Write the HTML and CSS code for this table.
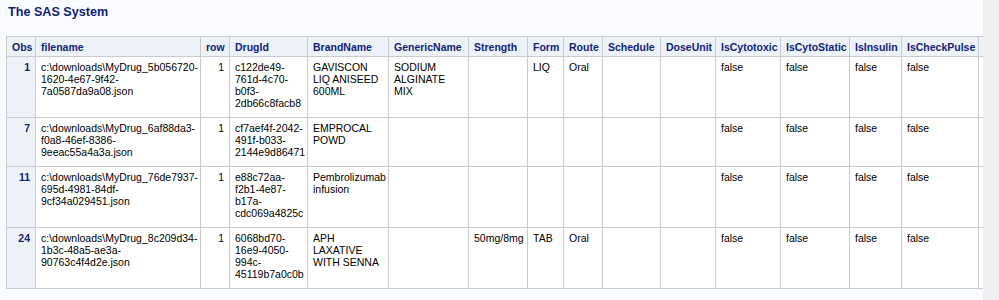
FILE: index.html
```html
<!DOCTYPE html>
<html>
<head>
<meta charset="utf-8">
<title>The SAS System</title>
<link rel="stylesheet" href="styles.css">
</head>
<body>
<div class="frame">
  <div class="page">
    <div class="title">The SAS System</div>
    <table class="sas">
      <colgroup>
        <col class="w-obs"><col class="w-file"><col class="w-row"><col class="w-drug"><col class="w-brand"><col class="w-generic"><col class="w-strength"><col class="w-form"><col class="w-route"><col class="w-sched"><col class="w-dose"><col class="w-cytotox"><col class="w-cytostat"><col class="w-insulin"><col class="w-pulse"><col class="w-more">
      </colgroup>
      <thead>
        <tr>
          <th>Obs</th><th>filename</th><th class="num">row</th><th>DrugId</th><th>BrandName</th><th>GenericName</th><th>Strength</th><th>Form</th><th>Route</th><th>Schedule</th><th>DoseUnit</th><th>IsCytotoxic</th><th>IsCytoStatic</th><th>IsInsulin</th><th>IsCheckPulse</th><th></th>
        </tr>
      </thead>
      <tbody>
        <tr>
          <th class="obs">1</th>
          <td>c:\downloads\MyDrug_5b056720-<br>1620-4e67-9f42-<br>7a0587da9a08.json</td>
          <td class="num">1</td>
          <td>c122de49-<br>761d-4c70-<br>b0f3-<br>2db66c8facb8</td>
          <td>GAVISCON<br>LIQ ANISEED<br>600ML</td>
          <td>SODIUM<br>ALGINATE<br>MIX</td>
          <td></td>
          <td>LIQ</td>
          <td>Oral</td>
          <td></td>
          <td></td>
          <td>false</td><td>false</td><td>false</td><td>false</td><td></td>
        </tr>
        <tr>
          <th class="obs">7</th>
          <td>c:\downloads\MyDrug_6af88da3-<br>f0a8-46ef-8386-<br>9eeac55a4a3a.json</td>
          <td class="num">1</td>
          <td>cf7aef4f-2042-<br>491f-b033-<br>2144e9d86471</td>
          <td>EMPROCAL<br>POWD</td>
          <td></td>
          <td></td>
          <td></td>
          <td></td>
          <td></td>
          <td></td>
          <td>false</td><td>false</td><td>false</td><td>false</td><td></td>
        </tr>
        <tr>
          <th class="obs">11</th>
          <td>c:\downloads\MyDrug_76de7937-<br>695d-4981-84df-<br>9cf34a029451.json</td>
          <td class="num">1</td>
          <td>e88c72aa-<br>f2b1-4e87-<br>b17a-<br>cdc069a4825c</td>
          <td>Pembrolizumab<br>infusion</td>
          <td></td>
          <td></td>
          <td></td>
          <td></td>
          <td></td>
          <td></td>
          <td>false</td><td>false</td><td>false</td><td>false</td><td></td>
        </tr>
        <tr>
          <th class="obs">24</th>
          <td>c:\downloads\MyDrug_8c209d34-<br>1b3c-48a5-ae3a-<br>90763c4f4d2e.json</td>
          <td class="num">1</td>
          <td>6068bd70-<br>16e9-4050-<br>994c-<br>45119b7a0c0b</td>
          <td>APH<br>LAXATIVE<br>WITH SENNA</td>
          <td></td>
          <td>50mg/8mg</td>
          <td>TAB</td>
          <td>Oral</td>
          <td></td>
          <td></td>
          <td>false</td><td>false</td><td>false</td><td>false</td><td></td>
        </tr>
      </tbody>
    </table>
  </div>
  <div class="scrolltrack"></div>
</div>
</body>
</html>
```
FILE: styles.css
```css
html, body {
  margin: 0;
  padding: 0;
}
body {
  background: #fafbfe;
  font-family: "Liberation Sans", Arial, sans-serif;
  color: #000;
}
.frame {
  display: flex;
  height: 300px;
  overflow: hidden;
}
.page {
  flex: 0 0 983px;
  overflow: hidden;
}
.scrolltrack {
  flex: 1 1 auto;
  background: #efefef;
}
.title {
  margin: 5px 0 0 8px;
  font-size: 12.6px;
  line-height: 15px;
  font-weight: bold;
  color: #112277;
  white-space: nowrap;
}
.sas {
  margin: 16px 0 0 6px;
  border-collapse: separate;
  border-spacing: 0;
  table-layout: fixed;
  width: 1033px;
  border-top: 1px solid #c8ccd2;
  border-left: 1px solid #c8ccd2;
  font-size: 10.5px;
  line-height: 12px;
}
.sas th,
.sas td {
  border-right: 1px solid #c8ccd2;
  border-bottom: 1px solid #c8ccd2;
  padding: 4px 5px 8px 5px;
  vertical-align: top;
  text-align: left;
  white-space: nowrap;
  overflow: hidden;
}
.sas td {
  background: #ffffff;
}
.sas th {
  background: #edf2f9;
  color: #112277;
  font-weight: bold;
}
.sas thead th {
  padding: 4px 5px 3px 5px;
}
.sas th.obs,
.sas .num {
  text-align: right;
}
.w-obs { width: 29px; }
.w-file { width: 165px; }
.w-row { width: 29px; }
.w-drug { width: 78px; }
.w-brand { width: 81px; }
.w-generic { width: 80px; }
.w-strength { width: 59px; }
.w-form { width: 36px; }
.w-route { width: 39px; }
.w-sched { width: 58px; }
.w-dose { width: 55px; }
.w-cytotox { width: 65px; }
.w-cytostat { width: 69px; }
.w-insulin { width: 52px; }
.w-pulse { width: 77px; }
.w-more { width: 60px; }
```
